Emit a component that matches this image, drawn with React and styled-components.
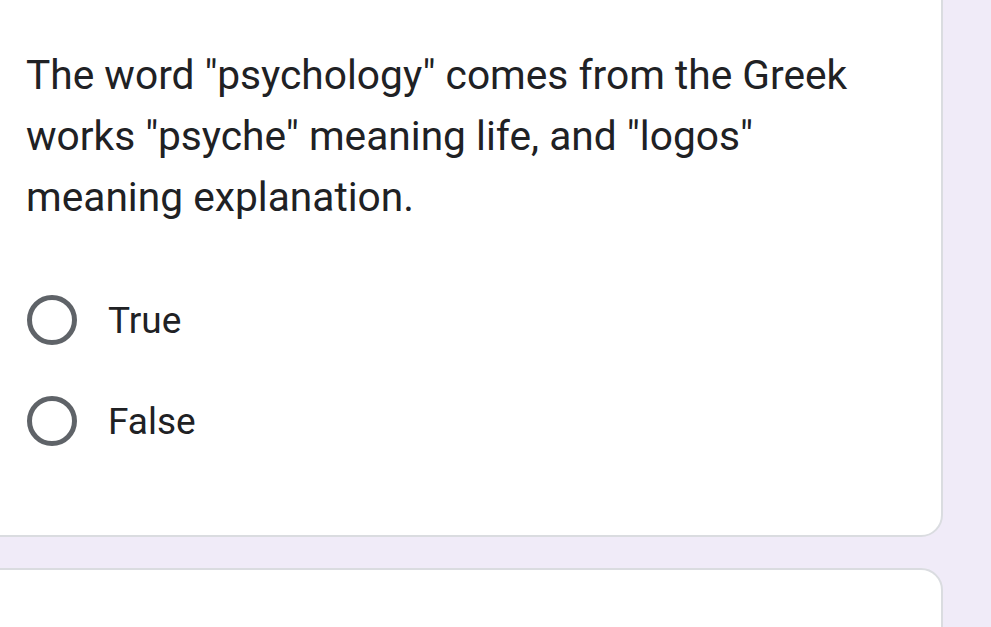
import React from "react";
import styled, { createGlobalStyle } from "styled-components";

const Global = createGlobalStyle`
  html, body { margin: 0; padding: 0; background: #f0ebf8; }
  body { font-family: Roboto, "Noto Sans", Arial, sans-serif; overflow: hidden; }
`;

const Page = styled.div`
  width: 991px;
  height: 627px;
  overflow: hidden;
  background: #f0ebf8;
  display: flex;
  flex-direction: column;
  gap: 31px;
`;

const Card = styled.div`
  box-sizing: border-box;
  width: 973px;
  margin-left: -30px;
  background: #ffffff;
  border: 2px solid #dadce0;
  border-radius: 22px;
  flex-shrink: 0;
  margin-top: ${(p) => p.$top || 0}px;
  height: ${(p) => p.$h}px;
`;

const QuestionCard = styled(Card)`
  padding: 73px 0 0 54px;
`;

const Question = styled.div`
  font-size: 40.7px;
  line-height: 61px;
  color: #202124;
  width: 860px;
`;

const Options = styled.div`
  display: flex;
  flex-direction: column;
  gap: 50px;
  margin-top: 66px;
  margin-left: 1px;
`;

const Option = styled.label`
  display: flex;
  align-items: center;
  gap: 31px;
  height: 51px;
`;

const Radio = styled.span`
  box-sizing: border-box;
  width: 50px;
  height: 50px;
  border-radius: 50%;
  border: 5px solid #5f6368;
  flex-shrink: 0;
`;

const OptionText = styled.span`
  font-size: 37px;
  color: #202124;
  position: relative;
  top: 1px;
`;

export default function App() {
  return (
    <>
      <Global />
      <Page>
        <QuestionCard $top={-30} $h={567}>
          <Question>
            The word "psychology" comes from the Greek works "psyche" meaning life, and "logos" meaning explanation.
          </Question>
          <Options>
            <Option>
              <Radio />
              <OptionText>True</OptionText>
            </Option>
            <Option>
              <Radio />
              <OptionText>False</OptionText>
            </Option>
          </Options>
        </QuestionCard>
        <Card $h={200} />
      </Page>
    </>
  );
}
